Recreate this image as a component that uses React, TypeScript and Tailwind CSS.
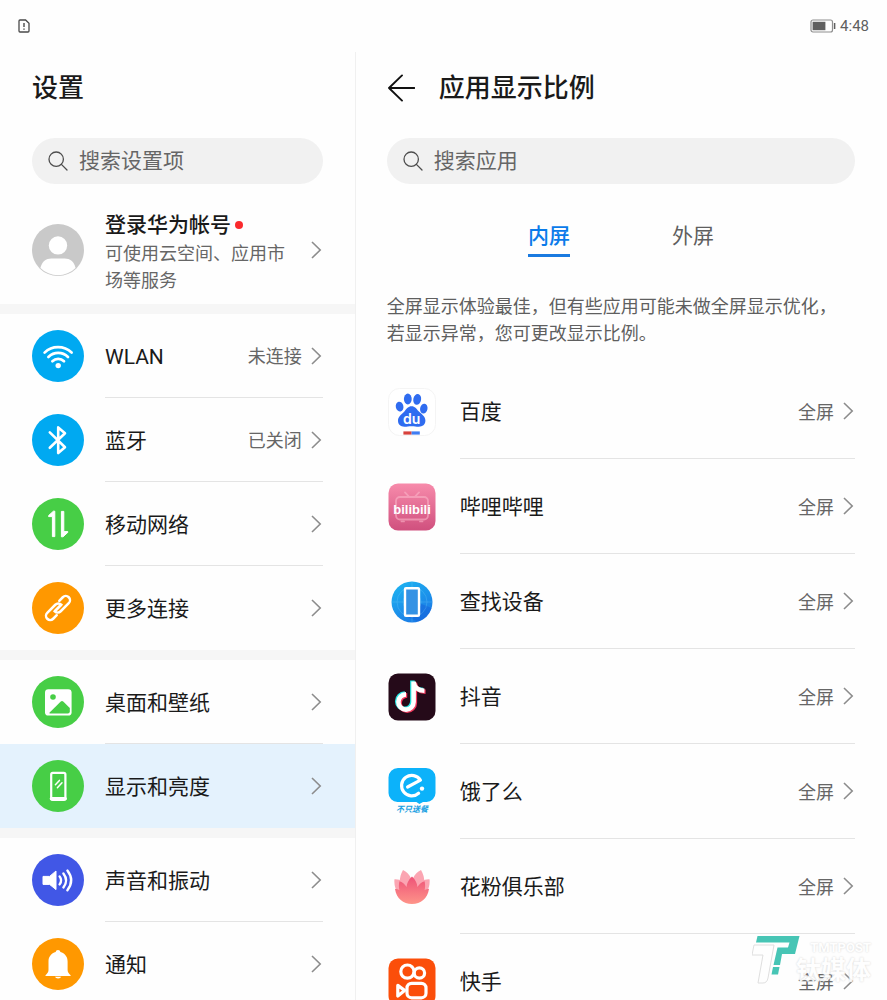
import { useId, useState } from "react";
import type { ReactNode } from "react";
import clsx from "clsx";

type SettingItem = {
  label: string;
  value?: string;
  color: string;
  icon: ReactNode;
};

type AppItem = {
  label: string;
  icon: ReactNode;
};

const WifiIcon = (
  <g fill="none" stroke="#fff" strokeWidth="2.7" strokeLinecap="round">
    <path d="M12.6 22.6C20 15.4 32 15.4 39.6 22.6" />
    <path d="M16.4 27C22 21.6 30.4 21.6 36 27" />
    <path d="M20.4 31.2C23.6 28 28.8 28 32 31.2" />
    <circle cx="26.2" cy="35.6" r="2.7" fill="#fff" stroke="none" />
  </g>
);

const BluetoothIcon = (
  <path
    d="M17.8 18.4 33 33.2 26.2 39V13.4L33 19.2 17.8 33.8"
    fill="none"
    stroke="#fff"
    strokeWidth="2.6"
    strokeLinecap="round"
    strokeLinejoin="round"
  />
);

const NetworkIcon = (
  <g fill="#fff" stroke="#fff" strokeWidth="1" strokeLinejoin="round">
    <path d="M22.8 13.2V38.6H20.4V18.6H16.6V17.6L21.4 13.2Z" />
    <path d="M29.4 13.4H31.8V33.6H35.8V34.4L31 38.8H29.4Z" />
  </g>
);

const LinkIcon = (
  <g
    fill="none"
    stroke="#fff"
    strokeWidth="2.5"
    strokeLinecap="round"
    transform="rotate(-45 26 26)"
  >
    <path d="M20 30.2H15a4.2 4.2 0 0 1 0-8.4h11.4a4.2 4.2 0 0 1 4.2 4.2H22" />
    <path d="M32 21.8h5a4.2 4.2 0 0 1 0 8.4H25.6a4.2 4.2 0 0 1-4.2-4.2H30" />
  </g>
);

const PictureIcon = (
  <>
    <rect x="13" y="13.2" width="26.6" height="26.4" rx="3.4" fill="#fff" />
    <circle cx="21" cy="21" r="2.8" fill="#47ce46" />
    <path
      d="M17.4 36.8 28.8 25.4Q30 24.4 31.2 25.4L37.8 32V35.4Q37.8 37.4 35.8 37.4H17.6Z"
      fill="#47ce46"
    />
  </>
);

const PhoneIcon = (
  <g fill="none" stroke="#fff" strokeLinecap="round">
    <rect x="19.2" y="12.8" width="14.2" height="27" rx="1.6" strokeWidth="2.2" />
    <path d="M19.4 38.8H33.2" strokeWidth="3.4" />
    <path d="M23.4 24.8 27.4 20.4M25.4 27.8 30 22.8" strokeWidth="1.5" />
  </g>
);

const SoundIcon = (
  <>
    <path
      d="M11 22.4H17.6L24 17V35.6L17.6 30.4H11Z"
      fill="#fff"
      stroke="#fff"
      strokeWidth="1"
      strokeLinejoin="round"
    />
    <g fill="none" stroke="#fff" strokeWidth="2.4" strokeLinecap="round">
      <path d="M27.6 22.4Q30.6 26.4 27.6 30.4" />
      <path d="M31.4 19.4Q36.8 26.4 31.4 33.4" />
      <path d="M35.4 16.6Q43 26.4 35.4 36.2" />
    </g>
  </>
);

const BellIcon = (
  <g fill="#fff">
    <path d="M26 12c1.4 0 2.2.8 2.4 2.1 4.4 1.2 7.2 4.8 7.2 9.3V32c0 2.2 1.2 3.4 3 5.2v.7H13.5v-.7c1.8-1.8 3-3 3-5.2v-8.6c0-4.5 2.8-8.1 7.2-9.3.2-1.3.9-2.1 2.3-2.1Z" />
    <path d="M23 38.8H29.2a3.2 2.4 0 0 1-6.2 0Z" />
  </g>
);

const groups: SettingItem[][] = [
  [
    { label: "WLAN", value: "未连接", color: "#00a9f1", icon: WifiIcon },
    { label: "蓝牙", value: "已关闭", color: "#00a9f1", icon: BluetoothIcon },
    { label: "移动网络", color: "#47ce46", icon: NetworkIcon },
    { label: "更多连接", color: "#ff9800", icon: LinkIcon },
  ],
  [
    { label: "桌面和壁纸", color: "#47ce46", icon: PictureIcon },
    { label: "显示和亮度", color: "#47ce46", icon: PhoneIcon },
  ],
  [
    { label: "声音和振动", color: "#4157e6", icon: SoundIcon },
    { label: "通知", color: "#ff9800", icon: BellIcon },
  ],
];

const BaiduIcon = (
  <>
    <rect x="0.5" y="0.5" width="47" height="47" rx="11" fill="#fff" stroke="#f4f4f4" />
    <g fill="#2f6cf0">
      <ellipse cx="11.6" cy="18.6" rx="3.8" ry="5" transform="rotate(-12 11.6 18.6)" />
      <ellipse cx="19.8" cy="11" rx="3.9" ry="5.4" />
      <ellipse cx="29.2" cy="11.4" rx="3.9" ry="5.4" transform="rotate(10 29.2 11.4)" />
      <ellipse cx="35.8" cy="20.6" rx="3.7" ry="5" transform="rotate(10 35.8 20.6)" />
      <path d="M23.6 18.2c3.4 0 4.8 2.4 6.800 4.800 2.600 2.900 7 5 7 9.600 0 4.200-2.900 6.200-6.600 6.200-2.600 0-4.400-.6-7.200-.6s-4.600.6-7.200.6c-3.900 0-6.400-2.200-6.400-6.200 0-4.500 4.300-6.500 6.600-9.400 2-2.600 3.600-5 7-5Z" />
    </g>
    <text x="23.6" y="36" textAnchor="middle" fill="#fff" fontFamily="Inter, sans-serif" fontWeight="600" fontSize="14">
      du
    </text>
    <path d="M15.4 43.4H23.6V46.6H15.4Z" fill="#d8423c" />
    <path d="M23.6 43.4H31.8V46.6H23.6Z" fill="#3f7df2" />
  </>
);

const BilibiliIcon = (
  <>
    <defs>
      <linearGradient id="bili" x1="0" y1="0" x2="0" y2="1">
        <stop offset="0" stopColor="#f78bab" />
        <stop offset="1" stopColor="#d0507e" />
      </linearGradient>
    </defs>
    <rect x="0.5" y="0.5" width="47" height="47" rx="9.5" fill="url(#bili)" />
    <g fill="none" stroke="#fbb4c8" strokeWidth="1.8" strokeLinecap="round" opacity="0.6">
      <rect x="8" y="14" width="32" height="22.5" rx="4" />
      <path d="M17 9.400 21 13.600M31 9.400 27 13.600M13.500 38.400H16M32 38.400H34.500" />
    </g>
    <text x="24" y="31" textAnchor="middle" fill="#fff" fontFamily="'Liberation Sans', sans-serif" fontWeight="700" fontSize="13">
      bilibili
    </text>
  </>
);

const FindDeviceIcon = (
  <>
    <defs>
      <linearGradient id="find" x1="0" y1="0" x2="0.6" y2="1">
        <stop offset="0" stopColor="#1db8f2" />
        <stop offset="1" stopColor="#1b7be6" />
      </linearGradient>
    </defs>
    <circle cx="24" cy="24" r="20.5" fill="url(#find)" />
    <path d="M31 25 43.600 30A20.500 20.500 0 0 1 30 43.600L17 38Z" fill="#1668dc" opacity="0.6" />
    <g fill="none" stroke="#7fd4fa" strokeWidth="0.7" opacity="0.35">
      <circle cx="24" cy="24" r="15" />
      <circle cx="24" cy="24" r="9" />
      <path d="M24 4V44M4 24H44" />
    </g>
    <rect x="17" y="10.200" width="14" height="27.600" rx="1" fill="#3492e4" stroke="#fff" strokeWidth="2.400" />
  </>
);

const notePath = "M25.6 8.400V29a7.600 7.600 0 1 1-7.600-7.600M25.600 9.400C26.400 14.400 30 17.600 36.400 17.800";

const DouyinIcon = (
  <>
    <rect x="0.5" y="0.5" width="47" height="47" rx="9.5" fill="#250a19" />
    <g fill="none" strokeWidth="4.6">
      <path d={notePath} stroke="#25e5e2" transform="translate(-1.2 -0.8)" />
      <path d={notePath} stroke="#f23a5e" transform="translate(1.2 1)" />
      <path d={notePath} stroke="#fff" />
    </g>
  </>
);

const ElemeIcon = (
  <>
    <path
      d="M10 0H38a9.500 9.500 0 0 1 9.500 9.500V25a9 9 0 0 1-9 9H35l-3.600 2-3-2H9.500A9 9 0 0 1 .5 25V9.500A9.500 9.500 0 0 1 10 0Z"
      fill="#0cb2fa"
    />
    <path
      d="M19.600 19 32.400 12.200A10.200 10.200 0 1 0 30.600 25.200"
      fill="none"
      stroke="#fff"
      strokeWidth="3.2"
      strokeLinecap="round"
      strokeLinejoin="round"
    />
    <circle cx="34" cy="20.600" r="2.200" fill="#fff" />
    <text x="24" y="44.400" textAnchor="middle" fill="#169fe2" fontFamily="'Noto Sans CJK SC', sans-serif" fontWeight="700" fontStyle="italic" fontSize="8">
      不只送餐
    </text>
  </>
);

const LotusIcon = (
  <>
    <defs>
      <linearGradient id="lotus" x1="0" y1="0" x2="0" y2="1">
        <stop offset="0" stopColor="#ee5278" />
        <stop offset="1" stopColor="#fe9489" />
      </linearGradient>
    </defs>
    <g fill="#fba5b2">
      <path d="M15 7C22 10.5 26 17 24 30L12 26C11 18 12 12 15 7Z" />
      <path d="M33 7C26 10.5 22 17 24 30L36 26C37 18 36 12 33 7Z" />
      <path d="M6.4 16.4C12 16 17 19 20 26L12 33C7.6 28 6 22 6.4 16.4Z" />
      <path d="M41.6 16.4C36 16 31 19 28 26L36 33C40.4 28 42 22 41.6 16.4Z" />
    </g>
    <path
      d="M24 13.6C27.6 17 29.2 20.4 29.4 24 31.4 20.8 33.6 19 36.6 18.2 37.4 22 37.2 24.6 36.6 27.2 38.2 26.2 39.6 26 41 26 39.4 35.6 33 41 24 41S8.600 35.600 7 26C8.400 26 9.800 26.200 11.400 27.200 10.800 24.600 10.600 22 11.400 18.200 14.400 19 16.600 20.800 18.600 24 18.800 20.400 20.400 17 24 13.600Z"
      fill="url(#lotus)"
    />
  </>
);

const KuaishouIcon = (
  <>
    <rect x="0.5" y="0.5" width="47" height="47" rx="9.5" fill="#fb4e0a" />
    <g fill="none" stroke="#fff" strokeWidth="3.2" strokeLinejoin="round">
      <circle cx="19.4" cy="13.6" r="6.6" />
      <circle cx="31.4" cy="15" r="5.2" />
      <rect x="19" y="25.4" width="19" height="14.4" rx="4.6" />
      <path d="M9.8 27.4 16.6 32.4 9.8 38Z" />
    </g>
  </>
);

const apps: AppItem[] = [
  { label: "百度", icon: BaiduIcon },
  { label: "哔哩哔哩", icon: BilibiliIcon },
  { label: "查找设备", icon: FindDeviceIcon },
  { label: "抖音", icon: DouyinIcon },
  { label: "饿了么", icon: ElemeIcon },
  { label: "花粉俱乐部", icon: LotusIcon },
  { label: "快手", icon: KuaishouIcon },
];

function Chevron() {
  return (
    <svg viewBox="0 0 12 18" className="h-[18px] w-3 shrink-0" aria-hidden="true">
      <path d="M1 1 9.2 9 1 17" fill="none" stroke="#8c8c8c" strokeWidth="1.6" />
    </svg>
  );
}

function SearchBox({ placeholder }: { placeholder: string }) {
  const id = useId();
  return (
    <div className="flex h-[46px] items-center gap-[11px] rounded-full bg-[#f1f1f1] px-4">
      <label htmlFor={id} aria-label={placeholder}>
        <svg viewBox="0 0 20 20" className="size-5" aria-hidden="true">
          <g fill="none" stroke="#4d4d4d" strokeWidth="1.3" strokeLinecap="round">
            <circle cx="8.2" cy="8.2" r="7.2" />
            <path d="M13.4 13.4 19 19" />
          </g>
        </svg>
      </label>
      <input
        id={id}
        type="search"
        placeholder={placeholder}
        className="min-w-0 flex-1 bg-transparent text-[21px] leading-[30px] outline-none placeholder:text-[#666]"
      />
    </div>
  );
}

function StatusBar() {
  return (
    <header className="flex h-[52px] shrink-0 items-center justify-between px-[18px] text-[#5f5f5f]">
      <svg viewBox="0 0 12 14" className="h-[14px] w-3" aria-hidden="true">
        <path
          d="M2 1H7.6L11 4.2V12a1 1 0 0 1-1 1H2a1 1 0 0 1-1-1V2a1 1 0 0 1 1-1Z"
          fill="none"
          stroke="#4a4a4a"
          strokeWidth="1.3"
        />
        <path d="M6 4V8M6 9.4V10.8" stroke="#4a4a4a" strokeWidth="1.4" />
      </svg>
      <div className="flex items-center gap-1">
        <svg viewBox="0 0 26 14" className="h-[14px] w-[26px]" aria-hidden="true">
          <rect x="1" y="1" width="21.5" height="12" rx="2" fill="none" stroke="#8e8e8e" strokeWidth="1.2" />
          <rect x="2.6" y="2.8" width="12.8" height="8.4" fill="#606060" />
          <path d="M24.6 4V10" stroke="#606060" strokeWidth="1.5" />
        </svg>
        <span className="text-[15px] leading-5">4:48</span>
      </div>
    </header>
  );
}

function AccountRow() {
  return (
    <button type="button" className="mt-[14px] flex w-full items-center px-8 pt-2 pb-[10px] text-left">
      <svg viewBox="0 0 52 52" className="size-[52px] shrink-0" aria-hidden="true">
        <circle cx="26" cy="26" r="26" fill="#c9c9c9" />
        <circle cx="26" cy="21.4" r="9.2" fill="#fff" />
        <path
          d="M8.4 44C10 37 14 34.4 19.4 34.4H32.6C38 34.4 42 37 43.6 44A25 25 0 0 1 8.4 44Z"
          fill="#fff"
        />
      </svg>
      <span className="ml-[21px] block min-w-0 flex-1 pt-1 pr-3">
        <span className="flex items-center gap-1 text-[21px] leading-[30px] font-medium">
          登录华为帐号
          <span className="size-2 rounded-full bg-[#fa2a2d]" />
        </span>
        <span className="block text-[18px] leading-[27px] text-[#666]">
          可使用云空间、应用市场等服务
        </span>
      </span>
      <Chevron />
    </button>
  );
}

function SettingRow({
  item,
  selected,
  last,
  onSelect,
}: {
  item: SettingItem;
  selected: boolean;
  last: boolean;
  onSelect: () => void;
}) {
  return (
    <li>
      <button
        type="button"
        onClick={onSelect}
        className={clsx("flex w-full items-center gap-[21px] px-8 text-left", selected && "bg-[#e4f2fd]")}
      >
        <svg viewBox="0 0 52 52" className="size-[52px] shrink-0" aria-hidden="true">
          <circle cx="26" cy="26" r="26" fill={item.color} />
          {item.icon}
        </svg>
        <span
          className={clsx(
            "flex h-[84px] min-w-0 flex-1 items-center gap-[9px] border-b",
            last ? "border-transparent" : "border-[#e4e4e4]",
          )}
        >
          <span className="flex-1 pt-0.5 text-[21px] leading-[30px]">{item.label}</span>
          {item.value && (
            <span className="pt-0.5 text-[18px] leading-[27px] text-[#666]">{item.value}</span>
          )}
          <Chevron />
        </span>
      </button>
    </li>
  );
}

function AppRow({ app }: { app: AppItem }) {
  return (
    <li>
      <button type="button" className="flex w-full items-center gap-[23px] text-left">
        <span className="flex w-[50px] shrink-0 justify-center">
          <svg viewBox="0 0 48 48" className="size-12" aria-hidden="true">
            {app.icon}
          </svg>
        </span>
        <span className="flex h-[95px] min-w-0 flex-1 items-center gap-[9px] border-b border-[#e4e4e4]">
          <span className="flex-1 pt-0.5 text-[21px] leading-[30px]">{app.label}</span>
          <span className="pt-0.5 text-[18px] leading-[27px] text-[#666]">全屏</span>
          <Chevron />
        </span>
      </button>
    </li>
  );
}

function Watermark() {
  return (
    <div className="pointer-events-none absolute right-4 bottom-3 flex items-end opacity-90">
      <svg viewBox="0 0 48 52" className="h-[52px] w-12" aria-hidden="true">
        <path d="M2 9H22L16 42Q15 47 11 47H6L11 19H0Z" fill="#fff" stroke="#dcdcdc" strokeWidth="1" />
        <path d="M5.500 0H47.500L43 18H30L28 29H21.500L25.500 11.500H36L37.500 6.500H4Z" fill="#34bfae" />
        <path d="M21 31H27.500L26 38.500H19.500Z" fill="#34bfae" />
      </svg>
      <div className="-ml-1 flex flex-col items-end text-white">
        <span className="text-[13px] leading-3 font-bold [text-shadow:0_0_2px_#cfcfcf]">TMTPOST</span>
        <span className="text-[25px] leading-[34px] font-bold [text-shadow:0_0_2px_#cfcfcf]">钛媒体</span>
      </div>
    </div>
  );
}

const tabs = ["内屏", "外屏"];

export default function App() {
  const [selected, setSelected] = useState("显示和亮度");
  const [tab, setTab] = useState("内屏");

  return (
    <div className="relative flex h-screen flex-col overflow-hidden bg-[#fefefe] font-['Roboto','Noto_Sans_CJK_SC',sans-serif] text-[#1a1a1a]">
      <StatusBar />
      <div className="flex min-h-0 flex-1">
        <nav className="w-2/5 shrink-0 overflow-hidden">
          <h1 className="px-8 pt-4 pb-[30px] text-[26px] leading-10 font-medium">设置</h1>
          <div className="px-8">
            <SearchBox placeholder="搜索设置项" />
          </div>
          <AccountRow />
          {groups.map((group) => (
            <ul key={group[0].label} className="border-t-10 border-[#f6f6f6]">
              {group.map((item, index) => (
                <SettingRow
                  key={item.label}
                  item={item}
                  selected={item.label === selected}
                  last={index === group.length - 1}
                  onSelect={() => setSelected(item.label)}
                />
              ))}
            </ul>
          ))}
        </nav>

        <main className="min-w-0 flex-1 overflow-hidden border-l border-[#f0f0f0] pr-8 pl-[31px]">
          <div className="flex items-center gap-6 pt-4 pb-[30px]">
            <button type="button" aria-label="返回">
              <svg viewBox="0 0 28 28" className="size-7" aria-hidden="true">
                <path
                  d="M27.4 14H2M15 1.4 2 14 15 26.6"
                  fill="none"
                  stroke="#111"
                  strokeWidth="1.9"
                  strokeLinecap="round"
                  strokeLinejoin="round"
                />
              </svg>
            </button>
            <h2 className="text-[26px] leading-10 font-medium">应用显示比例</h2>
          </div>
          <SearchBox placeholder="搜索应用" />

          <div role="tablist" className="mt-[37px] flex justify-center gap-[102px]">
            {tabs.map((name) => (
              <button
                key={name}
                type="button"
                role="tab"
                aria-selected={name === tab}
                onClick={() => setTab(name)}
                className={clsx(
                  "border-b-3 pb-[3px] text-[21px] leading-[30px]",
                  name === tab
                    ? "border-[#1a7ae0] font-medium text-[#0a7bea]"
                    : "border-transparent text-[#5f5f5f]",
                )}
              >
                {name}
              </button>
            ))}
          </div>

          <p className="mt-9 pr-2 text-[18px] leading-[27px] text-[#5f5f5f]">
            全屏显示体验最佳，但有些应用可能未做全屏显示优化，若显示异常，您可更改显示比例。
          </p>

          <ul className="mt-[17px]">
            {apps.map((app) => (
              <AppRow key={app.label} app={app} />
            ))}
          </ul>
        </main>
      </div>
      <Watermark />
    </div>
  );
}
